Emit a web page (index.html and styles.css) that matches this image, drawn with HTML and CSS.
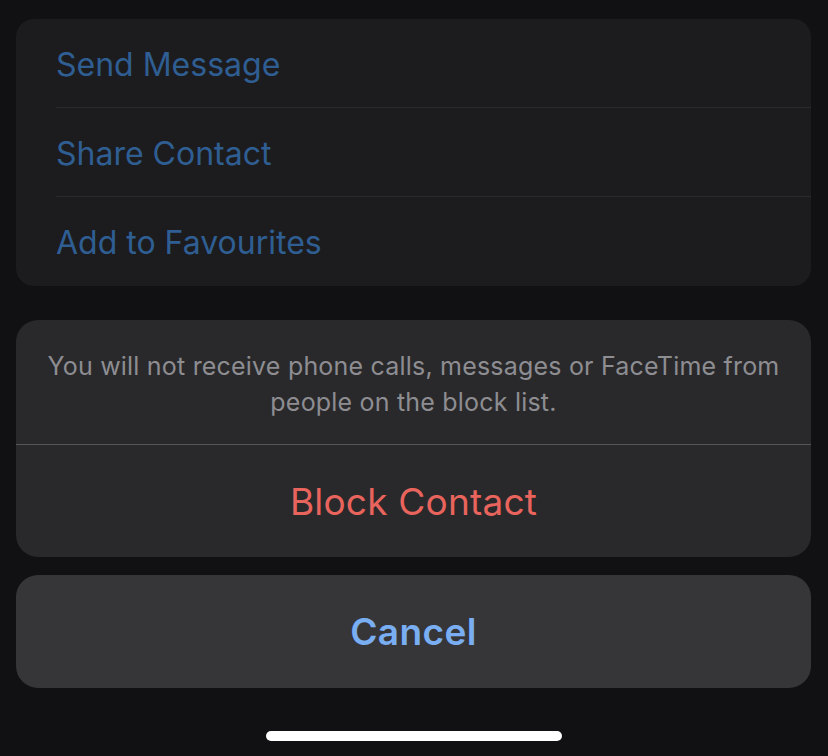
FILE: index.html
```html
<!DOCTYPE html>
<html>
    <head>
        <title>Contact</title>
        <link rel="stylesheet" href="styles.css">
    </head>
    <body>
        <!-- contact actions, dimmed behind the sheet -->
        <div class="card">
            <div class="row">Send Message</div>
            <div class="row">Share Contact</div>
            <div class="row">Add to Favourites</div>
        </div>

        <!-- block confirmation sheet -->
        <div class="sheet">
            <p class="message">You will not receive phone calls, messages or FaceTime from people on the block list.</p>
            <button class="action destructive">Block Contact</button>
        </div>
        <button class="cancel">Cancel</button>

        <div class="home-bar"></div>
    </body>
</html>
```

FILE: styles.css
```css
html {
    height: 100%;
}

body {
    margin: 0;
    padding: 19px 17px 0 16px;
    height: 756px;
    box-sizing: border-box;
    background: #111113;
    font-family: Inter, "Noto Sans", sans-serif;
    display: flex;
    flex-direction: column;
}

.card {
    background: #1c1c1e;
    border-radius: 18px;
    padding-left: 40px;
}

.row {
    height: 88px;
    line-height: 92px;
    font-size: 32px;
    color: #2f5e93;
    border-bottom: 1px solid #2a2a2d;
}

.row:last-child {
    height: 89px;
    border-bottom: none;
}

.sheet {
    margin-top: 34px;
    background: #29292b;
    border-radius: 22px;
    overflow: hidden;
}

.message {
    margin: 0;
    padding: 28px 20px 24px;
    text-align: center;
    font-size: 25px;
    line-height: 36px;
    letter-spacing: 0.2px;
    color: #8d8d92;
    border-bottom: 1px solid #57575b;
}

.action {
    display: block;
    width: 100%;
    height: 112px;
    border: none;
    background: none;
    font-family: inherit;
    font-size: 37px;
    letter-spacing: 0.2px;
    padding: 0;
}

.destructive {
    color: #e8645c;
}

.cancel {
    margin-top: 18px;
    height: 113px;
    border: none;
    border-radius: 22px;
    background: #363638;
    color: #7aaef2;
    font-family: inherit;
    font-size: 37px;
    font-weight: 600;
    letter-spacing: 0.4px;
    padding: 0;
}

.home-bar {
    margin: 43px auto 0;
    width: 296px;
    height: 10px;
    border-radius: 5px;
    background: #ffffff;
}
```
